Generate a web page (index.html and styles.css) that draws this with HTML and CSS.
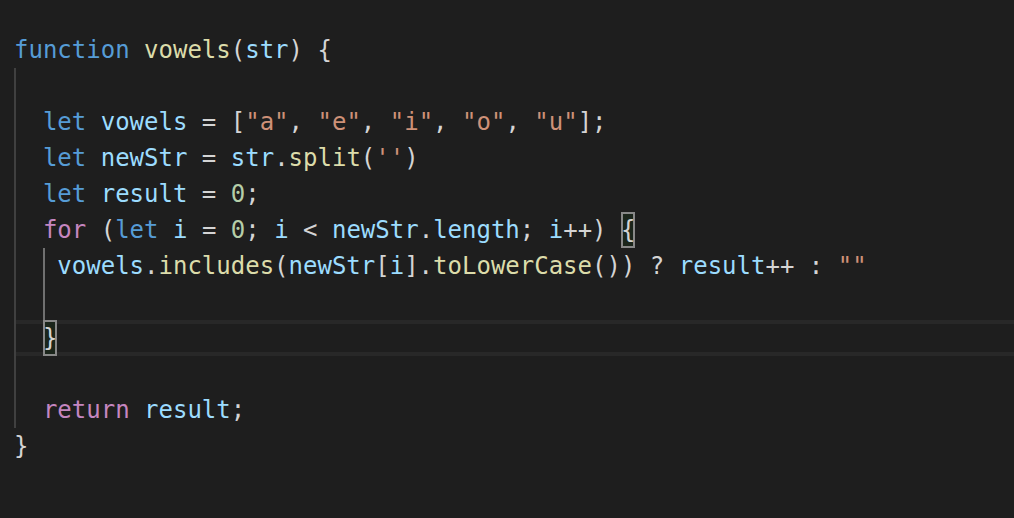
FILE: index.html
```html
<!DOCTYPE html>
<html>
<head>
<meta charset="utf-8">
<link rel="stylesheet" href="styles.css">
</head>
<body>
<div class="editor">
  <div class="line"><span class="kw">function</span> <span class="fn">vowels</span><span class="p">(</span><span class="var">str</span><span class="p">) {</span></div>
  <div class="line g1"></div>
  <div class="line g1">  <span class="kw">let</span> <span class="var">vowels</span> = [<span class="str">"a"</span>, <span class="str">"e"</span>, <span class="str">"i"</span>, <span class="str">"o"</span>, <span class="str">"u"</span>];</div>
  <div class="line g1">  <span class="kw">let</span> <span class="var">newStr</span> = <span class="var">str</span>.<span class="fn">split</span>(<span class="str">''</span>)</div>
  <div class="line g1">  <span class="kw">let</span> <span class="var">result</span> = <span class="num">0</span>;</div>
  <div class="line g1">  <span class="ctl">for</span> (<span class="kw">let</span> <span class="var">i</span> = <span class="num">0</span>; <span class="var">i</span> &lt; <span class="var">newStr</span>.<span class="var">length</span>; <span class="var">i</span>++) <span class="match">{</span></div>
  <div class="line g1 g2">   <span class="var">vowels</span>.<span class="fn">includes</span>(<span class="var">newStr</span>[<span class="var">i</span>].<span class="fn">toLowerCase</span>()) ? <span class="var">result</span>++ : <span class="str">""</span></div>
  <div class="line g1 g2"></div>
  <div class="line g1 current">  <span class="match">}</span></div>
  <div class="line g1"></div>
  <div class="line g1">  <span class="ctl">return</span> <span class="var">result</span>;</div>
  <div class="line">}</div>
</div>
</body>
</html>
```

FILE: styles.css
```css
html, body {
  margin: 0;
  padding: 0;
  background: #1e1e1e;
}

.editor {
  padding-top: 32px;
  font-family: "DejaVu Sans Mono", "Liberation Mono", monospace;
  font-size: 24px;
  color: #d4d4d4;
  width: 1014px;
  height: 486px;
}

.line {
  height: 36px;
  line-height: 36px;
  padding-left: 14px;
  white-space: pre;
  box-sizing: border-box;
}

.line.g1 {
  background: linear-gradient(#404040, #404040) 14px 0 / 2px 100% no-repeat;
}

.line.g1.g2 {
  background:
    linear-gradient(#404040, #404040) 14px 0 / 2px 100% no-repeat,
    linear-gradient(#707070, #707070) 43px 0 / 2px 100% no-repeat;
}

.line.g1.current {
  background:
    linear-gradient(#404040, #404040) 14px 0 / 2px 100% no-repeat,
    linear-gradient(#282828, #282828) 16px 0 / 100% 4px no-repeat,
    linear-gradient(#282828, #282828) 16px 100% / 100% 4px no-repeat;
}

.kw { color: #569cd6; }
.ctl { color: #c586c0; }
.fn { color: #dcdcaa; }
.var { color: #9cdcfe; }
.str { color: #ce9178; }
.num { color: #b5cea8; }
.p { color: #d4d4d4; }

.match {
  display: inline-block;
  vertical-align: top;
  height: 36px;
  line-height: 36px;
  background: #1b251b;
  box-shadow: inset 0 0 0 2px #888888;
}
```
